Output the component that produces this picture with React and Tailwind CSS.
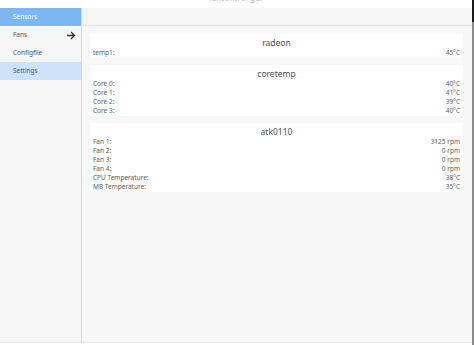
import React from "react";

const font = { fontFamily: '"Noto Sans", "Open Sans", sans-serif' };

function Card({ title, rows }) {
  return (
    <div className="bg-white px-[3px] pt-[4px] pb-[1px]">
      <div className="text-center text-[8.5px] leading-[10px] text-[#4a4a4a]">{title}</div>
      {rows.map(([k, v]) => (
        <div key={k} className="flex justify-between text-[6.5px] leading-[9px] text-[#5c5c5c]">
          <span>{k}</span>
          <span>{v}</span>
        </div>
      ))}
    </div>
  );
}

export default function App() {
  return (
    <div style={font} className="w-[474px] h-[345px] flex bg-white overflow-hidden">
      <div className="w-[472px] flex flex-col">
        <div className="h-[8px] overflow-hidden flex justify-center bg-white">
          <span className="text-[7px] leading-[8px] mt-[-5px] text-[#b5b5b5] tracking-[0.5px]">fancontrol-gui</span>
        </div>
        <div className="flex flex-1 border-b border-[#e6e6e6]">
          <div className="w-[82px] bg-[#f6f6f6] border-r border-[#d8d8d8] flex flex-col text-[6.5px] text-[#555]">
            <div className="h-[18px] bg-[#7cb7f2] flex items-center pl-[13px] text-[#f4f8fc]">Sensors</div>
            <div className="h-[18px] flex items-center justify-between pl-[13px] pr-[5px]">
              <span>Fans</span>
              <svg width="10" height="9" viewBox="0 0 10 9" fill="none" stroke="#333" strokeWidth="1.3">
                <path d="M1 4.5h7.5M5 1l3.5 3.5L5 8" />
              </svg>
            </div>
            <div className="h-[18px] flex items-center pl-[13px]">Configfile</div>
            <div className="h-[18px] bg-[#cfe3f8] flex items-center pl-[13px]">Settings</div>
          </div>
          <div className="flex-1 flex flex-col bg-[#f7f7f7]">
            <div className="h-[18px] bg-[#f5f5f5] border-b border-[#e2e2e2]"></div>
            <div className="flex flex-col gap-[7px] pt-[8px] pl-[8px] pr-[9px]">
              <Card title="radeon" rows={[["temp1:", "45°C"]]} />
              <Card
                title="coretemp"
                rows={[
                  ["Core 0:", "40°C"],
                  ["Core 1:", "41°C"],
                  ["Core 2:", "39°C"],
                  ["Core 3:", "40°C"],
                ]}
              />
              <Card
                title="atk0110"
                rows={[
                  ["Fan 1:", "3125 rpm"],
                  ["Fan 2:", "0 rpm"],
                  ["Fan 3:", "0 rpm"],
                  ["Fan 4:", "0 rpm"],
                  ["CPU Temperature:", "38°C"],
                  ["MB Temperature:", "35°C"],
                ]}
              />
            </div>
          </div>
        </div>
        <div className="h-[2px] bg-white"></div>
      </div>
      <div className="w-[2px] flex flex-col">
        <div className="h-[22px] bg-[#1a1a1a]"></div>
        <div className="flex-1 bg-[#8a8a8a]"></div>
      </div>
    </div>
  );
}
